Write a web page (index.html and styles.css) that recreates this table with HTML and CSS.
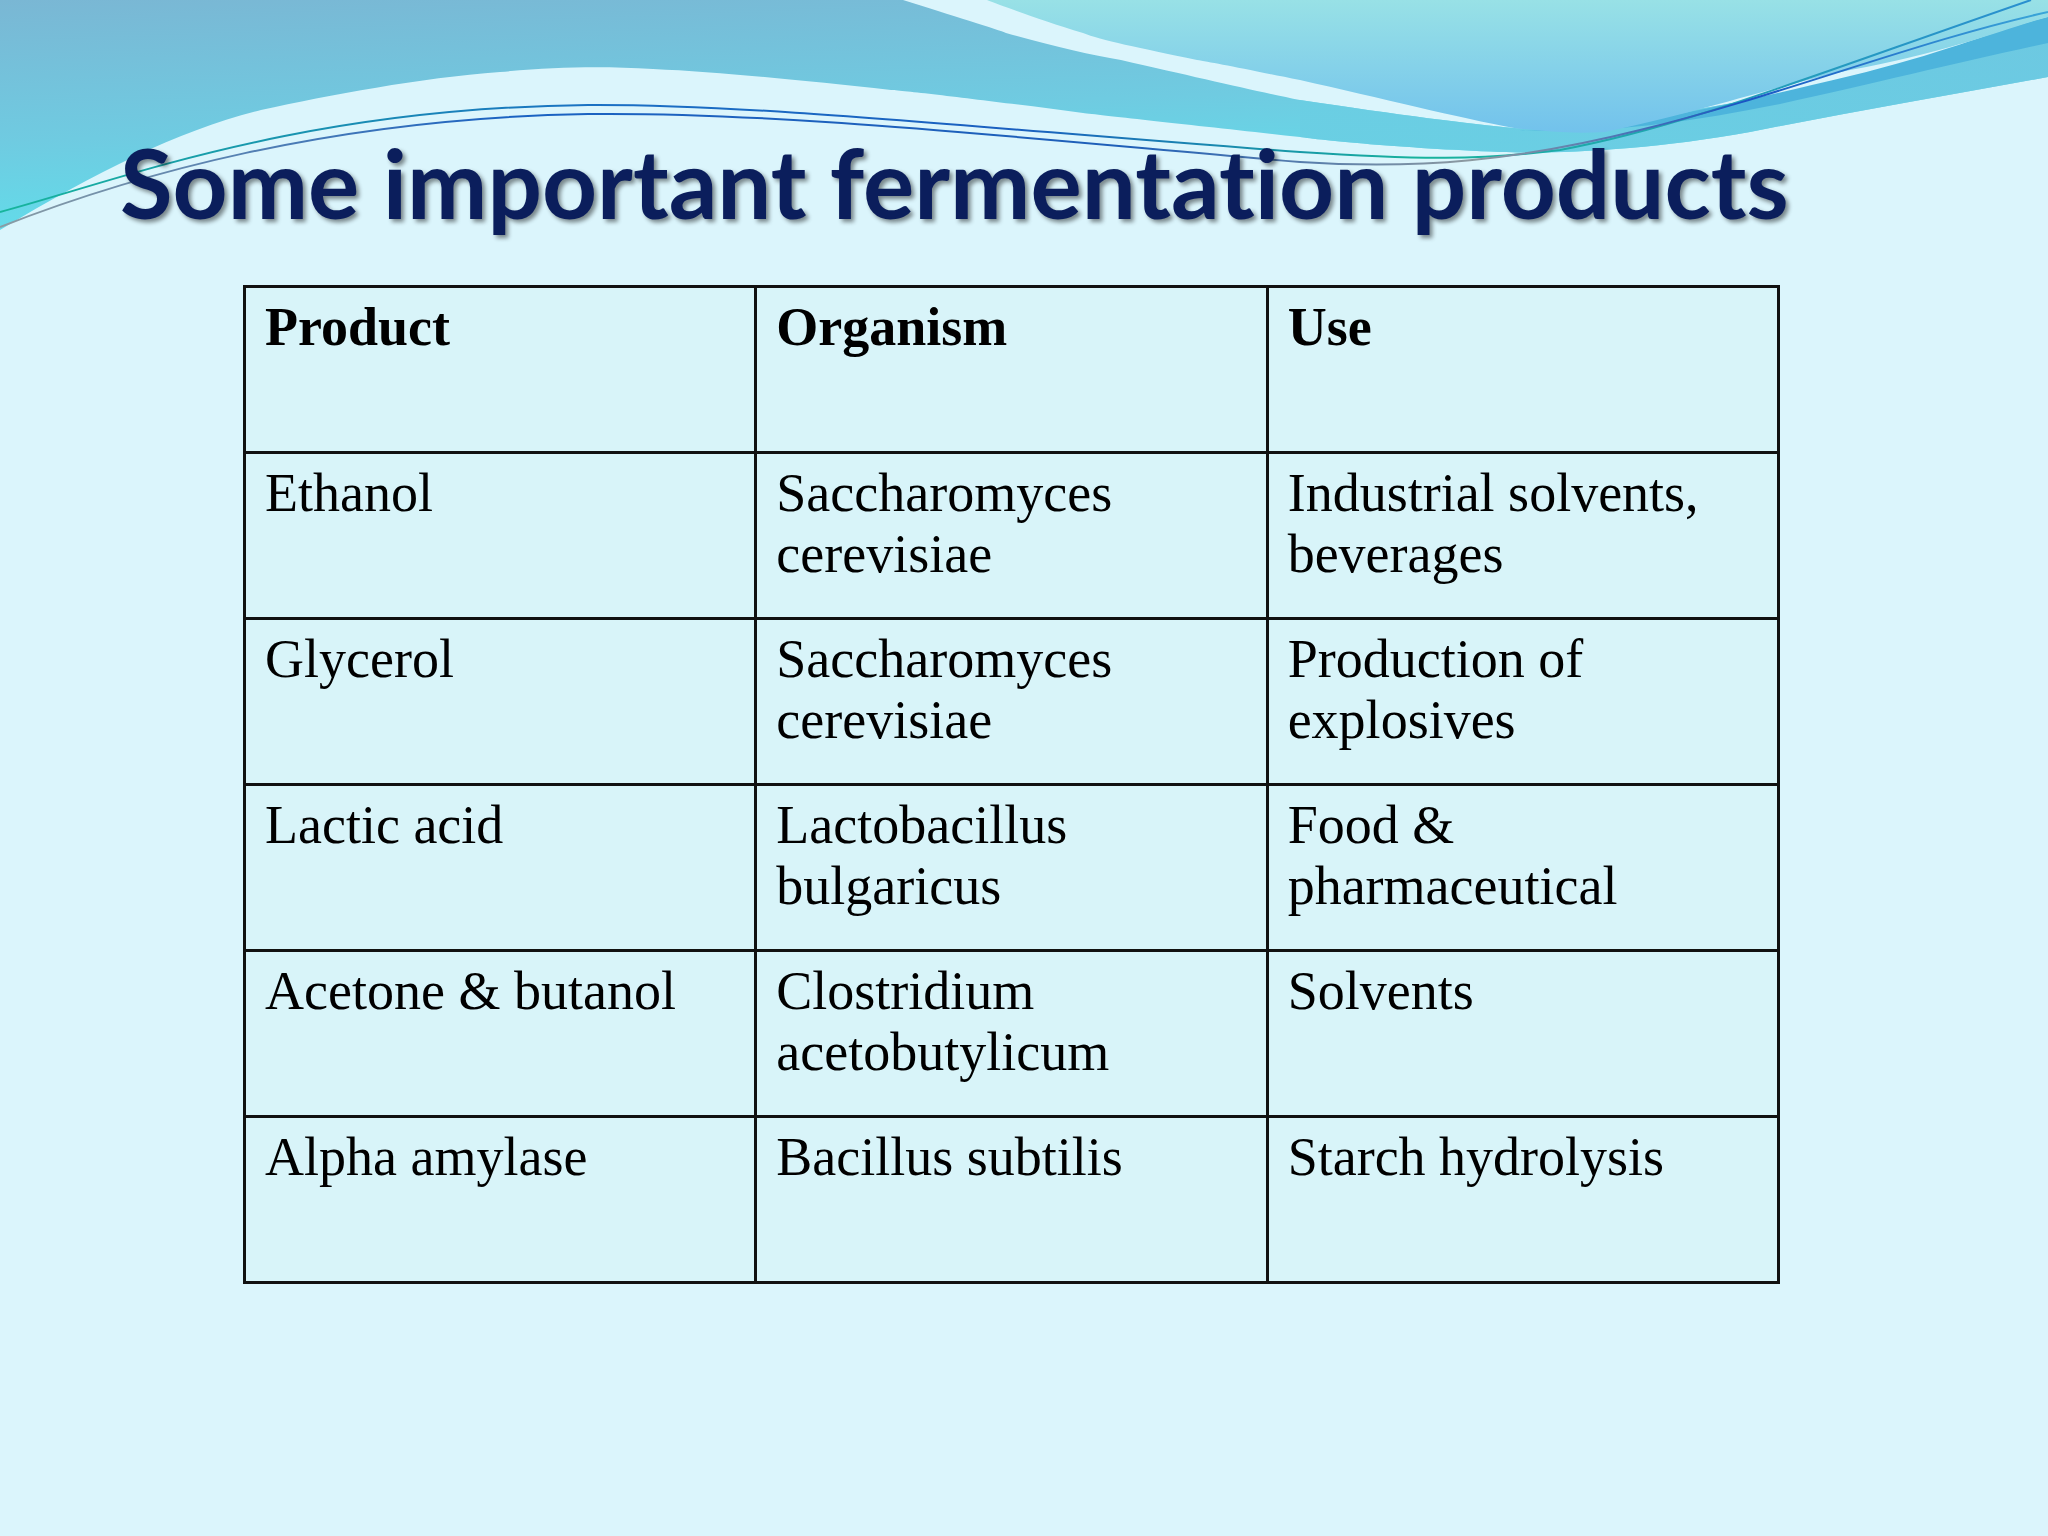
FILE: index.html
```html
<!DOCTYPE html>
<html lang="en">
<head>
<meta charset="utf-8">
<title>Some important fermentation products</title>
<link rel="stylesheet" href="styles.css">
</head>
<body>
<div class="slide">
  <svg class="waves" width="2048" height="300" viewBox="0 0 2048 300" aria-hidden="true">
    <defs>
      <linearGradient id="gB" x1="0" y1="0" x2="0.35" y2="1">
        <stop offset="0" stop-color="#7ab7d4"/>
        <stop offset="0.55" stop-color="#6fcbe1"/>
        <stop offset="1" stop-color="#5fe0ec"/>
      </linearGradient>
      <linearGradient id="gBr" x1="0" y1="0" x2="1" y2="0">
        <stop offset="0" stop-color="#6acee3"/>
        <stop offset="1" stop-color="#6cc9e2"/>
      </linearGradient>
      <linearGradient id="gD" x1="0" y1="0" x2="0" y2="1">
        <stop offset="0" stop-color="#98e1e6"/>
        <stop offset="1" stop-color="#72c2ec"/>
      </linearGradient>
      <linearGradient id="gL1" x1="0" y1="0" x2="1" y2="0">
        <stop offset="0" stop-color="#17b59c"/>
        <stop offset="0.3" stop-color="#1a6fc4"/>
        <stop offset="0.5" stop-color="#1a5fc0"/>
        <stop offset="0.7" stop-color="#18b39c"/>
        <stop offset="1" stop-color="#2a8fd0"/>
      </linearGradient>
      <linearGradient id="gL2" x1="0" y1="0" x2="1" y2="0">
        <stop offset="0" stop-color="#8a9ca4"/>
        <stop offset="0.25" stop-color="#1a62c2"/>
        <stop offset="0.55" stop-color="#1f5fb8"/>
        <stop offset="0.72" stop-color="#8d9aa0"/>
        <stop offset="0.85" stop-color="#1a55c4"/>
        <stop offset="1" stop-color="#3aa6d8"/>
      </linearGradient>
    </defs>
    <path fill="url(#gB)" d="M0,0 L903,0 C950,15 1000,30 1006,33 C1050,45 1090,55 1121,60 C1200,78 1260,92 1300,100 C1400,115 1470,124 1514,128 L1514,128 C1560,132 1700,112 1850,80 C1950,58 2000,30 2048,17 L2048,77 C1950,95 1850,112 1750,132 C1650,150 1560,154 1500,152 C1400,148 1320,140 1300,137 C1200,126 1100,115 1083,113 C1000,102 900,90 891,90 C800,80 720,72 653,69 C600,66 555,67 500,72 C420,78 330,95 261,110 C180,130 100,170 0,230 Z"/>
    <path fill="url(#gBr)" opacity="0.85" d="M1300,100 C1400,115 1470,124 1514,128 C1560,132 1700,112 1850,80 C1950,58 2000,30 2048,17 L2048,77 C1950,95 1850,112 1750,132 C1650,150 1560,154 1500,152 C1400,148 1320,140 1300,137 Z"/>
    <path fill="#4db4dc" d="M1520,130 C1600,133 1700,112 1850,76 C1950,52 2000,28 2048,17 L2048,43 C1960,62 1880,82 1780,104 C1680,124 1600,134 1520,130 Z"/>
    <path fill="url(#gD)" d="M987,0 L2048,0 L2048,17 C2000,30 1950,52 1850,70 C1760,90 1700,112 1605,132 C1570,134 1540,131 1514,128 C1460,118 1380,98 1300,80 C1240,68 1210,62 1197,60 C1140,48 1100,40 1083,33 C1040,20 1000,5 987,0 Z"/>
    <path fill="none" stroke="url(#gL1)" stroke-width="2" d="M0,212 C120,180 300,108 588,105 C760,104 1000,130 1300,152 C1420,160 1480,160 1560,150 C1680,128 1800,80 2031,0"/>
    <path fill="none" stroke="url(#gL2)" stroke-width="2" d="M0,227 C130,176 330,118 588,114 C780,112 1000,136 1300,162 C1420,170 1520,160 1640,130 C1780,96 1920,40 2048,12"/>
  </svg>

  <header class="head">
    <h1 class="title">Some important fermentation products</h1>
  </header>

  <table class="grid">
    <tr>
      <th>Product</th>
      <th>Organism</th>
      <th>Use</th>
    </tr>
    <tr>
      <td>Ethanol</td>
      <td>Saccharomyces cerevisiae</td>
      <td>Industrial solvents, beverages</td>
    </tr>
    <tr>
      <td>Glycerol</td>
      <td>Saccharomyces cerevisiae</td>
      <td>Production of explosives</td>
    </tr>
    <tr>
      <td>Lactic acid</td>
      <td>Lactobacillus bulgaricus</td>
      <td>Food &amp; pharmaceutical</td>
    </tr>
    <tr>
      <td>Acetone &amp; butanol</td>
      <td>Clostridium acetobutylicum</td>
      <td>Solvents</td>
    </tr>
    <tr>
      <td>Alpha amylase</td>
      <td>Bacillus subtilis</td>
      <td>Starch hydrolysis</td>
    </tr>
  </table>
</div>
</body>
</html>
```

FILE: styles.css
```css
html, body {
  margin: 0;
  padding: 0;
  background: #dbf5fc;
}

.slide {
  position: relative;
  width: 2048px;
  height: 1536px;
  overflow: hidden;
  background: #dbf5fc;
}

.waves {
  position: absolute;
  left: 0;
  top: 0;
  display: block;
}

.head {
  position: relative;
  box-sizing: border-box;
  height: 285px;
  padding: 134px 0 0 120px;
}

.title {
  margin: 0;
  font-family: Lato, "Open Sans", sans-serif;
  font-weight: 700;
  font-size: 96px;
  line-height: 1;
  color: #0b1e5c;
  text-shadow: 3px 3px 4px rgba(0, 0, 0, 0.45);
  white-space: nowrap;
  font-variant-ligatures: none;
  font-feature-settings: "liga" 0;
}

.grid {
  position: relative;
  margin-left: 243px;
  width: 1537px;
  border-collapse: collapse;
  table-layout: fixed;
  background: #d8f4f9;
  font-family: "Liberation Serif", "Times New Roman", serif;
  font-size: 54px;
  line-height: 61px;
  color: #000;
}

.grid tr {
  height: 166px;
}

.grid th,
.grid td {
  border: 3px solid #111;
  vertical-align: top;
  text-align: left;
  padding: 9px 24px 0 19px;
}

.grid th {
  font-weight: 700;
}
```
